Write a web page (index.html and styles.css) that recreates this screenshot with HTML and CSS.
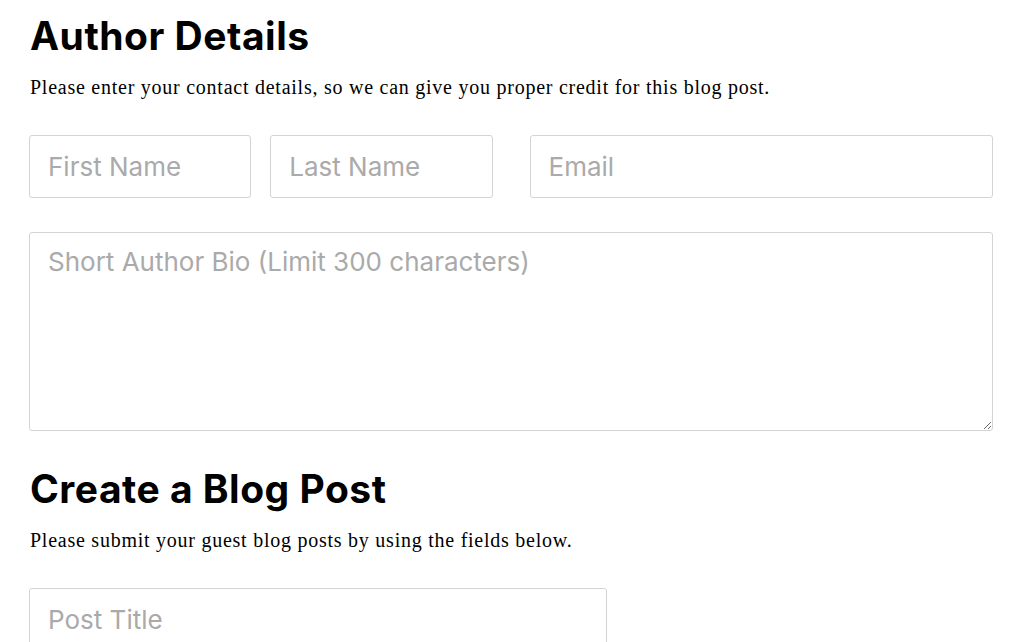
FILE: index.html
```html
<!DOCTYPE html>
<html>
<head>
    <meta charset="UTF-8">
    <link rel="stylesheet" href="styles.css">
</head>
<body>
    <form class="guest-form">
        <h1>Author Details</h1>
        <p class="intro">Please enter your contact details, so we can give you proper credit for this blog post.</p>

        <div class="row">
            <div class="name-fields">
                <input type="text" placeholder="First Name">
                <input type="text" placeholder="Last Name">
            </div>
            <input type="email" placeholder="Email">
        </div>

        <textarea class="bio" placeholder="Short Author Bio (Limit 300 characters)"></textarea>

        <h1>Create a Blog Post</h1>
        <p class="intro">Please submit your guest blog posts by using the fields below.</p>

        <input type="text" class="post-title" placeholder="Post Title">
    </form>
</body>
</html>
```

FILE: styles.css
```css
body {
    margin: 0;
    background-color: #fff;
    color: #000;
}

.guest-form {
    padding: 12px 31px 0 29px;
}

h1 {
    font-family: Inter, "Noto Sans", sans-serif;
    font-weight: 700;
    font-size: 39px;
    line-height: 47px;
    letter-spacing: 0.5px;
    margin: 0 0 0 1px;
}

.intro {
    font-family: "Liberation Serif", serif;
    font-size: 20px;
    line-height: 26px;
    letter-spacing: 0.75px;
    margin: 15px 0 35px 1px;
}

input, textarea {
    box-sizing: border-box;
    font-family: Inter, "Noto Sans", sans-serif;
    font-size: 26px;
    color: #333;
    border: 1px solid #d4d4d4;
    border-radius: 3px;
    padding: 0 18px;
    background: #fff;
    outline: none;
}

input::placeholder, textarea::placeholder {
    color: #aaa;
}

input {
    height: 63px;
}

.row {
    display: grid;
    grid-template-columns: 1fr 1fr;
    gap: 37px;
    margin-bottom: 34px;
}

.name-fields {
    display: grid;
    grid-template-columns: 1fr 1fr;
    gap: 19px;
}

.row input {
    width: 100%;
}

.bio {
    display: block;
    width: 100%;
    height: 199px;
    padding: 13px 18px;
    margin-bottom: 34px;
    resize: vertical;
}

.post-title {
    width: 60%;
}
```
